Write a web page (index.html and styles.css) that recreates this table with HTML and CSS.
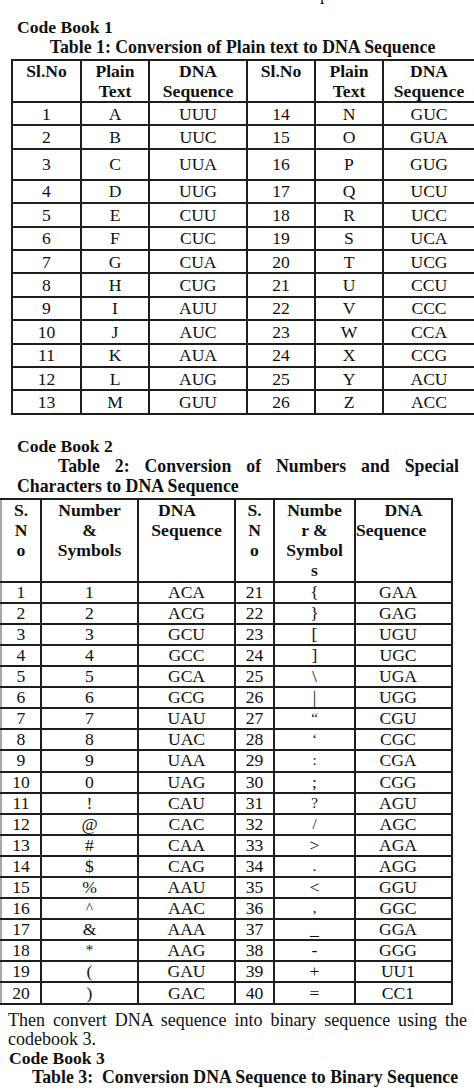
FILE: index.html
```html
<!DOCTYPE html>
<html lang="en">
<head>
<meta charset="utf-8">
<title>Code Books</title>
<link rel="stylesheet" href="styles.css">
</head>
<body>
<div class="cut"><div class="cut-line">p</div></div>
<div class="heading h1">Code Book 1</div>
<div class="caption c1">Table 1: Conversion of Plain text to DNA Sequence</div>
<table class="t1">
<colgroup><col class="w69"><col class="w68"><col class="w98"><col class="w68"><col class="w68"><col class="w92"></colgroup>
<thead>
<tr><th>Sl.No</th><th>Plain<br>Text</th><th>DNA<br>Sequence</th><th>Sl.No</th><th>Plain<br>Text</th><th class="last">DNA<br>Sequence</th></tr>
</thead>
<tbody>
<tr><td>1</td><td>A</td><td>UUU</td><td>14</td><td>N</td><td class="last">GUC</td></tr>
<tr><td>2</td><td>B</td><td>UUC</td><td>15</td><td>O</td><td class="last">GUA</td></tr>
<tr class="tall"><td>3</td><td>C</td><td>UUA</td><td class="top">16</td><td>P</td><td class="last">GUG</td></tr>
<tr><td>4</td><td>D</td><td>UUG</td><td>17</td><td>Q</td><td class="last">UCU</td></tr>
<tr><td>5</td><td>E</td><td>CUU</td><td>18</td><td>R</td><td class="last">UCC</td></tr>
<tr><td>6</td><td>F</td><td>CUC</td><td>19</td><td>S</td><td class="last">UCA</td></tr>
<tr><td>7</td><td>G</td><td>CUA</td><td>20</td><td>T</td><td class="last">UCG</td></tr>
<tr><td>8</td><td>H</td><td>CUG</td><td>21</td><td>U</td><td class="last">CCU</td></tr>
<tr><td>9</td><td>I</td><td>AUU</td><td>22</td><td>V</td><td class="last">CCC</td></tr>
<tr><td>10</td><td>J</td><td>AUC</td><td>23</td><td>W</td><td class="last">CCA</td></tr>
<tr><td>11</td><td>K</td><td>AUA</td><td>24</td><td>X</td><td class="last">CCG</td></tr>
<tr><td>12</td><td>L</td><td>AUG</td><td>25</td><td>Y</td><td class="last">ACU</td></tr>
<tr><td>13</td><td>M</td><td>GUU</td><td>26</td><td>Z</td><td class="last">ACC</td></tr>
</tbody>
</table>
<div class="heading h2">Code Book 2</div>
<div class="caption c2">Table 2: Conversion of Numbers and Special Characters to DNA Sequence</div>
<table class="t2">
<colgroup><col class="w40"><col class="w97"><col class="w97"><col class="w39"><col class="w81"><col class="w97"></colgroup>
<thead>
<tr><th class="first">S.<br>N<br>o</th><th>Number<br>&amp;<br>Symbols</th><th><span class="dna-shift">DNA</span><br>Sequence</th><th>S.<br>N<br>o</th><th>Numbe<br>r &amp;<br>Symbol<br>s</th><th>DNA<br><span class="seq-left">Sequence</span></th></tr>
</thead>
<tbody>
<tr><td class="first">1</td><td>1</td><td>ACA</td><td>21</td><td>{</td><td class="dna">GAA</td></tr>
<tr><td class="first">2</td><td>2</td><td>ACG</td><td>22</td><td>}</td><td class="dna">GAG</td></tr>
<tr><td class="first">3</td><td>3</td><td>GCU</td><td>23</td><td>[</td><td class="dna">UGU</td></tr>
<tr><td class="first">4</td><td>4</td><td>GCC</td><td>24</td><td>]</td><td class="dna">UGC</td></tr>
<tr><td class="first">5</td><td>5</td><td>GCA</td><td>25</td><td>\</td><td class="dna">UGA</td></tr>
<tr><td class="first">6</td><td>6</td><td>GCG</td><td>26</td><td>|</td><td class="dna">UGG</td></tr>
<tr><td class="first">7</td><td>7</td><td>UAU</td><td>27</td><td class="small">&#8220;</td><td class="dna">CGU</td></tr>
<tr><td class="first">8</td><td>8</td><td>UAC</td><td>28</td><td class="small">&#8216;</td><td class="dna">CGC</td></tr>
<tr><td class="first">9</td><td>9</td><td>UAA</td><td>29</td><td class="small">:</td><td class="dna">CGA</td></tr>
<tr><td class="first">10</td><td>0</td><td>UAG</td><td>30</td><td>;</td><td class="dna">CGG</td></tr>
<tr><td class="first">11</td><td>!</td><td>CAU</td><td>31</td><td class="small">?</td><td class="dna">AGU</td></tr>
<tr><td class="first">12</td><td>@</td><td>CAC</td><td>32</td><td class="small">/</td><td class="dna">AGC</td></tr>
<tr><td class="first">13</td><td>#</td><td>CAA</td><td>33</td><td>&gt;</td><td class="dna">AGA</td></tr>
<tr><td class="first">14</td><td>$</td><td>CAG</td><td>34</td><td class="small">.</td><td class="dna">AGG</td></tr>
<tr><td class="first">15</td><td>%</td><td>AAU</td><td>35</td><td>&lt;</td><td class="dna">GGU</td></tr>
<tr><td class="first">16</td><td class="small">^</td><td>AAC</td><td>36</td><td class="small">,</td><td class="dna">GGC</td></tr>
<tr><td class="first">17</td><td>&amp;</td><td>AAA</td><td>37</td><td>_</td><td class="dna">GGA</td></tr>
<tr><td class="first">18</td><td class="small">*</td><td>AAG</td><td>38</td><td>-</td><td class="dna">GGG</td></tr>
<tr><td class="first">19</td><td>(</td><td>GAU</td><td>39</td><td>+</td><td class="dna">UU1</td></tr>
<tr><td class="first">20</td><td>)</td><td>GAC</td><td>40</td><td>=</td><td class="dna">CC1</td></tr>
</tbody>
</table>
<p class="body-text">Then convert DNA sequence into binary sequence using the codebook 3.</p>
<div class="heading h3">Code Book 3</div>
<div class="caption c3">Table 3:&nbsp; Conversion DNA Sequence to Binary Sequence</div>
</body>
</html>
```
FILE: styles.css
```css
html, body {
  margin: 0;
  padding: 0;
  background: #fff;
}
body {
  width: 474px;
  overflow: hidden;
  font-family: "Liberation Serif", "Times New Roman", serif;
  color: #111;
}
.cut {
  height: 17px;
  overflow: hidden;
}
.cut-line {
  margin-top: -16px;
  padding-left: 320px;
  font-size: 18px;
  line-height: 20px;
}
.heading {
  font-weight: bold;
  font-size: 17.6px;
  line-height: 20px;
}
.h1, .h2 {
  padding-left: 17px;
}
.h2 {
  margin-top: 21px;
}
.h3 {
  padding-left: 9px;
  line-height: 19px;
}
.caption {
  font-weight: bold;
  font-size: 17.8px;
  line-height: 20px;
}
.c1 {
  padding-left: 11px;
  text-align: center;
  margin-bottom: 2px;
}
.c2 {
  padding-left: 17px;
  width: 442px;
  text-align: justify;
  text-indent: 41px;
  margin-bottom: 2px;
}
.c3 {
  padding-left: 32px;
  line-height: 19px;
}
table {
  border-collapse: collapse;
  table-layout: fixed;
}
th, td {
  border: 2px solid #1e1e1e;
  padding: 0;
  text-align: center;
  font-size: 17.6px;
  line-height: 20px;
  color: #111;
}
th {
  font-weight: bold;
  vertical-align: top;
}
.w69 { width: 69px; }
.w68 { width: 68px; }
.w98 { width: 98px; }
.w92 { width: 92px; }
.w40 { width: 40px; }
.w97 { width: 97px; }
.w39 { width: 39px; }
.w81 { width: 81px; }
.t1 {
  margin-left: 11px;
  width: 463px;
}
.t1 thead tr { height: 41px; }
.t1 tbody tr { height: 23.4px; }
.t1 tbody tr.tall { height: 31px; }
.t1 .last { border-right-color: #9a9a9a; }
.t1 td.top {
  vertical-align: top;
  padding-top: 4px;
}
.t2 {
  margin-left: 0;
  width: 452px;
}
.t2 thead tr { height: 83px; }
.t2 tbody tr { height: 21.1px; }
.t2 td { line-height: 17px; }
.t2 .first { border-left-color: #a8a8a8; }
.t2 td.dna { padding-right: 11px; }
.t2 td.small { font-size: 15px; }
.dna-shift { padding-right: 19px; }
.seq-left {
  display: block;
  text-align: left;
}
.body-text {
  margin: 6px 0 0;
  padding: 0 7px 0 8px;
  font-size: 18px;
  line-height: 19px;
  text-align: justify;
}
```
